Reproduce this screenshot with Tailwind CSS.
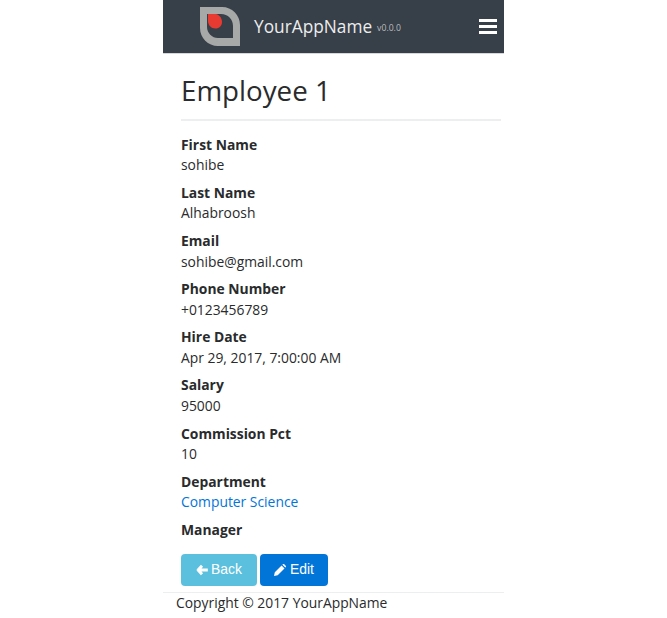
<!DOCTYPE html>
<html>
<head>
<meta charset="utf-8">
<script src="https://cdn.jsdelivr.net/npm/@tailwindcss/browser@4"></script>
</head>
<body class="bg-white font-['Open_Sans',sans-serif] text-[#292b2c]">
<div class="w-[341px] ml-[163px] h-[618px] flex flex-col">
  <header class="h-[54px] shrink-0 bg-[#373f48] border-b border-[#d5d7d9] flex items-center text-white">
    <svg class="ml-[37px] w-[40px] h-[39px]" viewBox="0 0 40 39">
      <path fill-rule="evenodd" fill="#a7a8a8" d="M0 0H22C32 0 40 8 40 18V39H18C8 39 0 31 0 21ZM7 7V20C7 26 12 31 18 31H33V19C33 12 28 7 21 7Z"/>
      <path fill="#e83a30" d="M8 7H16C20 8 22 12 22 15C22 19 19 21.500 15.500 21.500C11 21.500 8 18 8 14Z"/>
    </svg>
    <span class="ml-[14px] text-[17.3px] leading-none text-[#eceded] mt-[1px]">YourAppName</span>
    <span class="ml-[5px] text-[8.66px] leading-none text-[#b9bcbf] mt-[3px]">v0.0.0</span>
    <div class="ml-auto mr-[7px] w-[18px] flex flex-col gap-[3px]">
      <div class="h-[3px] bg-white"></div>
      <div class="h-[3px] bg-white"></div>
      <div class="h-[3px] bg-white"></div>
    </div>
  </header>
  <main class="pl-[18px] pr-[3px] flex-1 flex flex-col">
    <h1 class="text-[27.72px] leading-[34px] mt-[19px] pb-[12px] border-b-2 border-[#eceeef]">Employee 1</h1>
    <dl class="mt-[13px] text-[13.86px] leading-[21px]">
      <dt class="font-bold h-[20px]">First Name</dt><dd class="h-[28px]">sohibe</dd>
      <dt class="font-bold h-[20px]">Last Name</dt><dd class="h-[28px]">Alhabroosh</dd>
      <dt class="font-bold h-[20px]">Email</dt><dd class="h-[28px] pt-[0.5px]">sohibe@gmail.com</dd>
      <dt class="font-bold h-[20px]">Phone Number</dt><dd class="h-[28px] pt-[0.5px]">+0123456789</dd>
      <dt class="font-bold h-[20px]">Hire Date</dt><dd class="h-[28px] pt-[0.5px]">Apr 29, 2017, 7:00:00 AM</dd>
      <dt class="font-bold h-[20px]">Salary</dt><dd class="h-[29px] pt-[0.5px]">95000</dd>
      <dt class="font-bold h-[20px]">Commission Pct</dt><dd class="h-[28px]">10</dd>
      <dt class="font-bold h-[20px]">Department</dt><dd class="h-[28px] text-[#0275d8]">Computer Science</dd>
      <dt class="font-bold h-[21px]">Manager</dt>
    </dl>
    <div class="mt-[14px] flex gap-[3px] font-['Liberation_Sans',sans-serif] text-[13.86px] text-white">
      <button class="w-[76px] h-[32px] pb-[1px] rounded-[4px] bg-[#5bc0de] flex items-center justify-center gap-[3px]">
        <svg class="w-[12px] h-[12px]" viewBox="0 0 12 12"><path fill="none" stroke="white" stroke-width="3" stroke-linejoin="round" d="M6 1.800 2.100 6 6 10.200M2 6H11.800"/></svg>Back
      </button>
      <button class="w-[68px] h-[32px] pb-[1px] rounded-[4px] bg-[#0275d8] flex items-center justify-center gap-[4px]">
        <svg class="w-[12px] h-[12px]" viewBox="0 0 12 12"><path fill="white" d="M0 12 .8 8.300 7.600 1.500 10.500 4.400 3.700 11.200ZM8.400.7 9 .1C9.300-.1 9.700-.1 10 .1L11.900 2C12.100 2.300 12.100 2.700 11.900 3L11.300 3.600Z"/></svg>Edit
      </button>
    </div>
  </main>
  <footer class="h-[26px] border-t border-[#eceeef] pl-[13px] text-[13.86px] leading-[19px]">Copyright © 2017 YourAppName</footer>
</div>
</body>
</html>
